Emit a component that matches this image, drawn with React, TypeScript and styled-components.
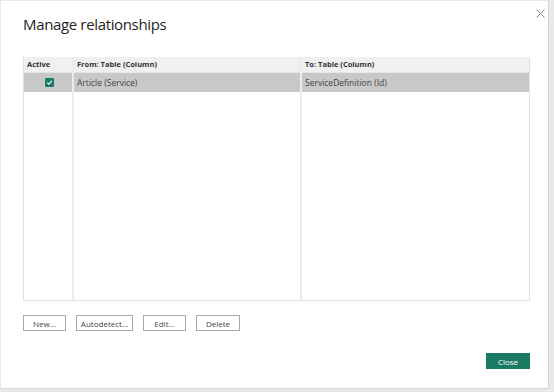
import React from "react";
import styled, { createGlobalStyle } from "styled-components";

const GlobalStyle = createGlobalStyle`
  html, body {
    margin: 0;
    padding: 0;
    background: #e9e9e9;
  }
  body {
    font-family: "Open Sans", "Noto Sans", sans-serif;
    color: #252423;
  }
`;

const Dialog = styled.div`
  position: relative;
  box-sizing: border-box;
  width: 548px;
  height: 388px;
  margin: 1px 0 0 1px;
  background: #ffffff;
  border-right: 1px solid #d6d6d6;
  border-bottom: 1px solid #d6d6d6;
  padding: 13px 18px 0 22px;
  display: flex;
  flex-direction: column;
`;

const CloseX = styled.button`
  position: absolute;
  top: 6px;
  right: 2px;
  width: 12px;
  height: 12px;
  padding: 0;
  border: 0;
  background: transparent;
  display: flex;
  align-items: center;
  justify-content: center;
`;

const Title = styled.h1`
  margin: 0;
  font-size: 15px;
  font-weight: 400;
  letter-spacing: -0.35px;
  line-height: 21px;
  color: #1f1f1f;
`;

const Table = styled.div`
  margin-top: 22px;
  height: 243px;
  display: grid;
  grid-template-columns: 50px 228px 1fr;
  border: 1px solid #e1e1e1;
  border-top: 0;
`;

const Column = styled.div<{ last?: boolean }>`
  display: flex;
  flex-direction: column;
  border-right: ${(p) => (p.last ? "0" : "2px solid #ececec")};
`;

const HeadCell = styled.div`
  height: 15px;
  background: #f0f0f0;
  border-bottom: 1px solid #e6e6e6;
  font-size: 7.5px;
  font-weight: 700;
  line-height: 15px;
  padding-left: 3px;
  color: #333;
`;

const RowCell = styled.div<{ center?: boolean }>`
  height: 19px;
  background: #c8c8c8;
  font-size: 8.5px;
  line-height: 19px;
  padding-left: 3px;
  color: #444;
  display: flex;
  align-items: center;
  justify-content: ${(p) => (p.center ? "center" : "flex-start")};
`;

const Check = styled.span`
  width: 9px;
  height: 9px;
  background: #1a7a64;
  border-radius: 1px;
  display: flex;
  align-items: center;
  justify-content: center;
`;

const Buttons = styled.div`
  margin-top: 14px;
  display: flex;
  gap: 10px;
`;

const Button = styled.button<{ w: number }>`
  box-sizing: border-box;
  width: ${(p) => p.w}px;
  height: 16px;
  padding: 0;
  background: #fff;
  border: 1px solid #a9a9a9;
  font-family: inherit;
  font-size: 8px;
  color: #444;
`;

const Footer = styled.div`
  margin-top: 22px;
  display: flex;
  justify-content: flex-end;
`;

const Primary = styled.button`
  width: 44px;
  height: 16px;
  padding: 0;
  border: 0;
  background: #1b7a64;
  color: #fff;
  font-family: inherit;
  font-size: 8px;
`;

export default function App() {
  return (
    <>
      <GlobalStyle />
      <Dialog>
        <CloseX aria-label="Close">
          <svg width="9" height="9" viewBox="0 0 9 9">
            <path d="M0.5 0.5L8.5 8.5M8.5 0.5L0.5 8.5" stroke="#888" strokeWidth="1" />
          </svg>
        </CloseX>
        <Title>Manage relationships</Title>
        <Table>
          <Column>
            <HeadCell>Active</HeadCell>
            <RowCell center>
              <Check>
                <svg width="7" height="7" viewBox="0 0 7 7">
                  <path d="M1.3 3.7L2.8 5.1L5.8 1.9" stroke="#fff" strokeWidth="1.1" fill="none" />
                </svg>
              </Check>
            </RowCell>
          </Column>
          <Column>
            <HeadCell>From: Table (Column)</HeadCell>
            <RowCell>Article (Service)</RowCell>
          </Column>
          <Column last>
            <HeadCell>To: Table (Column)</HeadCell>
            <RowCell>ServiceDefinition (Id)</RowCell>
          </Column>
        </Table>
        <Buttons>
          <Button w={43}>New…</Button>
          <Button w={57}>Autodetect…</Button>
          <Button w={43}>Edit…</Button>
          <Button w={44}>Delete</Button>
        </Buttons>
        <Footer>
          <Primary>Close</Primary>
        </Footer>
      </Dialog>
    </>
  );
}
